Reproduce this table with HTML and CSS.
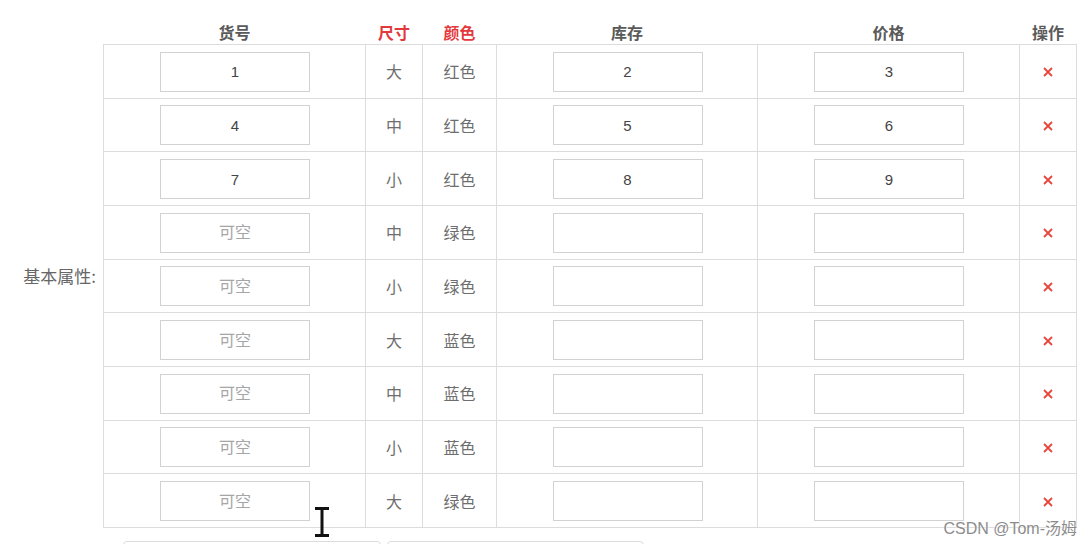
FILE: index.html
```html
<!DOCTYPE html>
<html lang="zh-CN">
<head>
<meta charset="utf-8">
<title>SKU</title>
<link rel="stylesheet" href="styles.css">
</head>
<body>
<div class="page">
  <div class="attr">
    <div class="attr-label">基本属性:</div>
    <div class="sku">
      <div class="sku-head">
        <div>货号</div>
        <div class="hl">尺寸</div>
        <div class="hl">颜色</div>
        <div>库存</div>
        <div>价格</div>
        <div>操作</div>
      </div>
      <div class="sku-body">
        <div class="cell"><input class="ipt" value="1"></div><div class="cell">大</div><div class="cell">红色</div><div class="cell"><input class="ipt" value="2"></div><div class="cell"><input class="ipt" value="3"></div><div class="cell"><svg class="del" viewBox="0 0 10 10"><path d="M1 1L9 9M9 1L1 9"/></svg></div>
        <div class="cell"><input class="ipt" value="4"></div><div class="cell">中</div><div class="cell">红色</div><div class="cell"><input class="ipt" value="5"></div><div class="cell"><input class="ipt" value="6"></div><div class="cell"><svg class="del" viewBox="0 0 10 10"><path d="M1 1L9 9M9 1L1 9"/></svg></div>
        <div class="cell"><input class="ipt" value="7"></div><div class="cell">小</div><div class="cell">红色</div><div class="cell"><input class="ipt" value="8"></div><div class="cell"><input class="ipt" value="9"></div><div class="cell"><svg class="del" viewBox="0 0 10 10"><path d="M1 1L9 9M9 1L1 9"/></svg></div>
        <div class="cell"><input class="ipt" placeholder="可空"></div><div class="cell">中</div><div class="cell">绿色</div><div class="cell"><input class="ipt"></div><div class="cell"><input class="ipt"></div><div class="cell"><svg class="del" viewBox="0 0 10 10"><path d="M1 1L9 9M9 1L1 9"/></svg></div>
        <div class="cell"><input class="ipt" placeholder="可空"></div><div class="cell">小</div><div class="cell">绿色</div><div class="cell"><input class="ipt"></div><div class="cell"><input class="ipt"></div><div class="cell"><svg class="del" viewBox="0 0 10 10"><path d="M1 1L9 9M9 1L1 9"/></svg></div>
        <div class="cell"><input class="ipt" placeholder="可空"></div><div class="cell">大</div><div class="cell">蓝色</div><div class="cell"><input class="ipt"></div><div class="cell"><input class="ipt"></div><div class="cell"><svg class="del" viewBox="0 0 10 10"><path d="M1 1L9 9M9 1L1 9"/></svg></div>
        <div class="cell"><input class="ipt" placeholder="可空"></div><div class="cell">中</div><div class="cell">蓝色</div><div class="cell"><input class="ipt"></div><div class="cell"><input class="ipt"></div><div class="cell"><svg class="del" viewBox="0 0 10 10"><path d="M1 1L9 9M9 1L1 9"/></svg></div>
        <div class="cell"><input class="ipt" placeholder="可空"></div><div class="cell">小</div><div class="cell">蓝色</div><div class="cell"><input class="ipt"></div><div class="cell"><input class="ipt"></div><div class="cell"><svg class="del" viewBox="0 0 10 10"><path d="M1 1L9 9M9 1L1 9"/></svg></div>
        <div class="cell"><input class="ipt" placeholder="可空"></div><div class="cell">大</div><div class="cell">绿色</div><div class="cell"><input class="ipt"></div><div class="cell"><input class="ipt"></div><div class="cell"><svg class="del" viewBox="0 0 10 10"><path d="M1 1L9 9M9 1L1 9"/></svg></div>
      </div>
    </div>
  </div>
  <div class="next-row">
    <div class="box wide"></div>
    <div class="box"></div>
  </div>
  <svg class="cursor" viewBox="0 0 18 30"><path d="M2 1.5H16M9 1.5V28.5M2 28.5H16"/></svg>
  <div class="watermark">CSDN @Tom-汤姆</div>
</div>
</body>
</html>
```
FILE: styles.css
```css
html, body {
  margin: 0;
  padding: 0;
  background: #fff;
}
body {
  font-family: "Noto Sans CJK SC", "Liberation Sans", sans-serif;
  font-size: 16px;
  color: #666;
}
.page {
  position: relative;
  width: 1092px;
  height: 544px;
  overflow: hidden;
  padding-top: 20px;
  box-sizing: border-box;
}
.attr {
  display: flex;
  align-items: center;
}
.attr-label {
  width: 103px;
  box-sizing: border-box;
  padding-right: 7px;
  text-align: right;
  font-size: 17px;
  color: #666;
  padding-top: 2px;
}
.sku {
  width: 974px;
}
.sku-head,
.sku-body {
  display: grid;
  grid-template-columns: 261px 56px 73px 260px 261px 56px;
  column-gap: 1px;
  padding: 0 1px;
}
.sku-head {
  height: 24px;
  line-height: 24px;
  font-size: 16px;
  font-weight: bold;
  color: #5a5a5a;
  text-align: center;
}
.sku-head .hl {
  color: #e4393c;
}
.sku-body {
  height: 484px;
  box-sizing: border-box;
  grid-template-rows: repeat(9, 1fr);
  gap: 1px;
  padding: 1px;
  background: #dcdcdc;
}
.cell {
  background: #fff;
  display: flex;
  align-items: center;
  justify-content: center;
  font-size: 16px;
  color: #6e6e6e;
}
.ipt {
  width: 150px;
  height: 40px;
  box-sizing: border-box;
  border: 1px solid #d2d2d2;
  border-radius: 0;
  margin: 1px 0 0 1px;
  padding: 0;
  outline: none;
  text-align: center;
  font-family: "Liberation Sans", "Noto Sans CJK SC", sans-serif;
  font-size: 15px;
  color: #444;
  background: #fff;
}
.ipt::placeholder {
  color: #a6a6a6;
  font-family: "Noto Sans CJK SC", sans-serif;
  font-size: 16px;
}
.del {
  width: 10px;
  height: 10px;
  margin-top: 2px;
  fill: none;
  stroke: #e8453c;
  stroke-width: 1.8;
}
.next-row {
  display: flex;
  gap: 6px;
  padding-left: 123px;
  margin-top: 13px;
}
.box {
  width: 257px;
  height: 36px;
  box-sizing: border-box;
  border: 1px solid #dcdcdc;
  border-radius: 4px;
}
.box.wide {
  width: 258px;
}
.cursor {
  position: absolute;
  left: 313px;
  top: 507px;
  width: 18px;
  height: 30px;
  fill: none;
  stroke: #111;
  stroke-width: 3;
}
.watermark {
  position: absolute;
  right: 15px;
  top: 515px;
  font-family: "Liberation Sans", "Noto Sans CJK SC", sans-serif;
  font-size: 16px;
  color: #8c8c8c;
  text-shadow: 0 0 2px #fff, 0 0 2px #fff;
}
```
